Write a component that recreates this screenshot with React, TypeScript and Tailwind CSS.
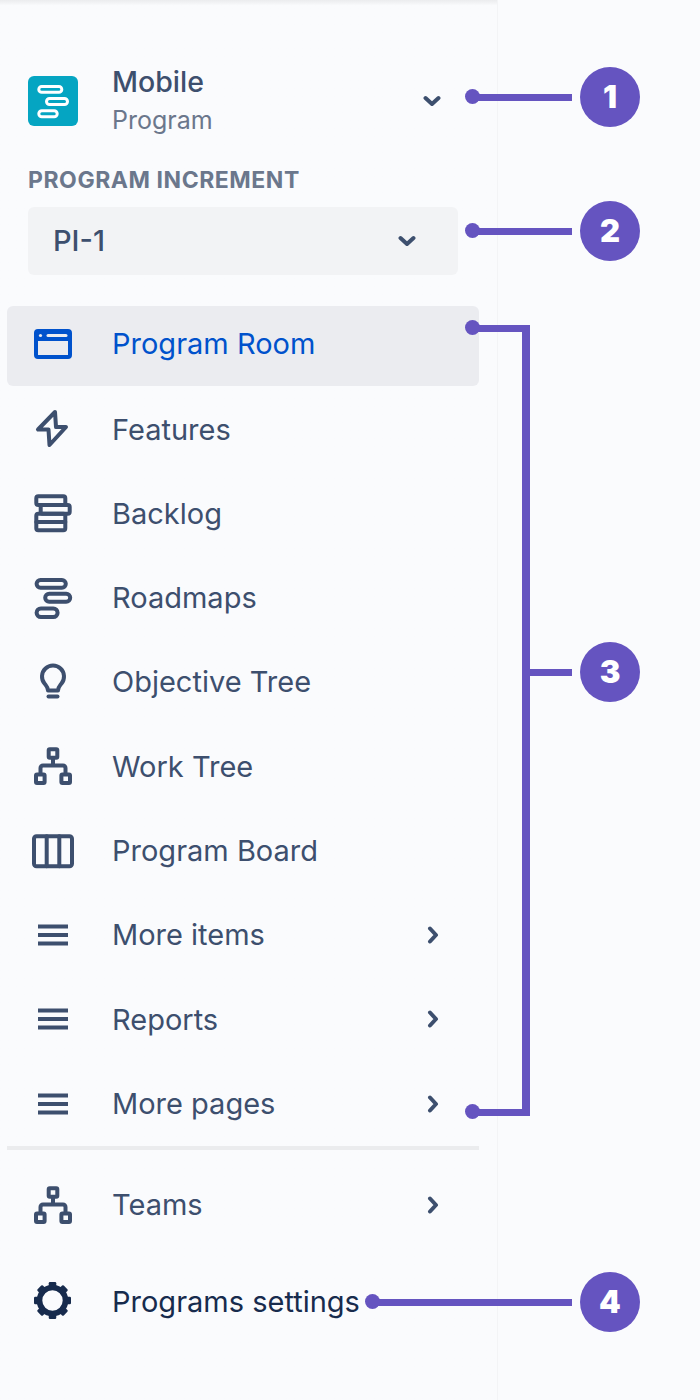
const Icon = ({ children, color = "#3d4f6e" }: { children: React.ReactNode; color?: string }) => (
  <svg width="40" height="40" viewBox="0 0 40 40" fill="none" stroke={color} strokeWidth="4" strokeLinecap="round" strokeLinejoin="round" className="shrink-0 overflow-visible">
    {children}
  </svg>
);

const WindowIcon = () => (
  <Icon color="#0052cc">
    <rect x="3" y="7" width="34" height="26" rx="2" />
    <rect x="2" y="6" width="36" height="11" fill="#0052cc" stroke="none" />
    <circle cx="7.5" cy="11.5" r="1.6" fill="#ebecf0" stroke="none" />
    <rect x="13.5" y="10" width="21" height="3" rx="1.5" fill="#ebecf0" stroke="none" />
  </Icon>
);

const BoltIcon = () => (
  <Icon>
    <path d="M22 3 5 20.5h10.5L16.5 36 33 18H23z" />
  </Icon>
);

const BacklogIcon = () => (
  <Icon>
    <rect x="3.3" y="2.3" width="29" height="8.7" rx="2" />
    <rect x="7.7" y="11" width="29" height="8.7" rx="2" />
    <rect x="3.3" y="19.7" width="29" height="16.6" rx="2" />
    <path d="M3.3 28h29" />
  </Icon>
);

const RoadmapIcon = () => (
  <Icon>
    <rect x="3.6" y="1.9" width="29.2" height="7.8" rx="3.9" />
    <rect x="12.2" y="15.8" width="25" height="8" rx="4" />
    <rect x="3.6" y="30.4" width="21" height="8.6" rx="4.3" />
  </Icon>
);

const BulbIcon = () => (
  <Icon>
    <path d="M15 28.5h10c0-3.5 1.5-4.5 3.5-7a11 11 0 1 0-17 0c2 2.5 3.5 3.5 3.5 7z" />
    <path d="M15.5 34.5h9" />
  </Icon>
);

const TreeIcon = () => (
  <Icon>
    <rect x="15.7" y="3.2" width="8.6" height="8.6" rx="1" />
    <rect x="3" y="28.4" width="8.6" height="8.6" rx="1" />
    <rect x="28.4" y="28.4" width="8.6" height="8.6" rx="1" />
    <path d="M20 12v7.5M7.5 28v-6a2.5 2.5 0 0 1 2.5-2.5h20a2.5 2.5 0 0 1 2.5 2.5v6" />
  </Icon>
);

const BoardIcon = () => (
  <Icon>
    <rect x="1" y="5.2" width="38" height="30" rx="2.5" />
    <path d="M13.7 5.2v30M26.3 5.2v30" />
  </Icon>
);

const MenuIcon = () => (
  <Icon>
    <g strokeLinecap="butt">
      <path d="M5 11.5h30M5 20h30M5 28.5h30" />
    </g>
  </Icon>
);

const GearIcon = () => (
  <Icon color="#172b4d">
    <circle cx="19.5" cy="18.5" r="13" strokeWidth="5.6" />
    {[0, 45, 90, 135, 180, 225, 270, 315].map((a) => (
      <rect key={a} x="15.75" y="0" width="7.5" height="6" rx="1.2" fill="#172b4d" stroke="none" transform={`rotate(${a} 19.5 18.5)`} />
    ))}
  </Icon>
);

const ChevronDown = () => (
  <svg width="18" height="12" viewBox="0 0 18 12" fill="none" stroke="#3d4f6e" strokeWidth="4" strokeLinecap="round" strokeLinejoin="round">
    <path d="M2.5 3 9 9l6.5-6" />
  </svg>
);

const ChevronRight = () => (
  <svg width="12" height="18" viewBox="0 0 12 18" fill="none" stroke="#3d4f6e" strokeWidth="4" strokeLinecap="round" strokeLinejoin="round">
    <path d="M3 2.5 9 9l-6 6.5" />
  </svg>
);

const items = [
  { label: "Features", icon: <BoltIcon /> },
  { label: "Backlog", icon: <BacklogIcon /> },
  { label: "Roadmaps", icon: <RoadmapIcon /> },
  { label: "Objective Tree", icon: <BulbIcon /> },
  { label: "Work Tree", icon: <TreeIcon /> },
  { label: "Program Board", icon: <BoardIcon /> },
  { label: "More items", icon: <MenuIcon />, more: true },
  { label: "Reports", icon: <MenuIcon />, more: true },
  { label: "More pages", icon: <MenuIcon />, more: true },
];

function NavRow({ label, icon, more }: { label: string; icon: React.ReactNode; more?: boolean }) {
  return (
    <div className="flex h-20 items-center pb-[2px] pl-[26px] pr-[40px] text-[#3d4f6e]">
      {icon}
      <span className="ml-[39px] flex-1">{label}</span>
      {more && <ChevronRight />}
    </div>
  );
}

// numbered callouts sit on top of the sidebar
const Callout = ({ n, className }: { n: number; className: string }) => (
  <div className={`absolute flex h-[60px] w-[60px] items-center justify-center rounded-full bg-[#6554c0] text-[31px] font-black text-white ${className}`}>
    {n}
  </div>
);

const Dot = ({ className }: { className: string }) => (
  <div className={`absolute h-[15px] w-[15px] rounded-full bg-[#6554c0] ${className}`} />
);

const Line = ({ className }: { className: string }) => <div className={`absolute bg-[#6554c0] ${className}`} />;

export default function App() {
  return (
    <div className="relative h-[1400px] w-[700px] overflow-hidden bg-[#fafbfd] font-['Inter',sans-serif] text-[29px] font-normal">
      <aside className="h-full w-[498px] border-r border-r-[#f3f4f6] bg-gradient-to-b from-[#ebecee] from-0% to-[#fafbfd] to-[0.4%] pt-[62px]">
        <div className="flex h-[78px] items-center pl-[28px] pr-[56px]">
          <svg width="50" height="50" viewBox="0 0 50 50" fill="none" stroke="#fff" strokeWidth="3" className="shrink-0">
            <rect width="50" height="50" rx="6" fill="#05a5c2" stroke="none" />
            <rect x="10.8" y="10.5" width="23" height="5.8" rx="2.9" />
            <rect x="18.5" y="22.5" width="21" height="6" rx="3" />
            <rect x="10.8" y="34.8" width="18.4" height="6" rx="3" />
          </svg>
          <div className="ml-[34px] flex-1">
            <div className="text-[28.5px] leading-[38px] font-medium text-[#3d4f6e]">Mobile</div>
            <div className="text-[25px] leading-[38px] text-[#6b778c]">Program</div>
          </div>
          <ChevronDown />
        </div>
        <div className="mt-[25px] pl-[28px] text-[23px] leading-[30px] font-bold tracking-[0.55px] text-[#6b778c]">PROGRAM INCREMENT</div>
        <div className="mt-[12px] ml-[28px] flex h-[68px] w-[430px] items-center justify-between rounded-[6px] bg-[#f2f3f5] pr-[42px] pl-[25px]">
          <span className="font-medium text-[#3d4f6e]">PI-1</span>
          <ChevronDown />
        </div>
        <nav className="mt-[31px] ml-[7px] w-[472px]">
          <div className="flex flex-col gap-[4.3px]">
            <div className="flex h-20 items-center rounded-[6px] bg-[#ebecf0] pb-[4px] pl-[26px] text-[#0052cc]">
              <WindowIcon />
              <span className="ml-[39px]">Program Room</span>
            </div>
            {items.map((it) => (
              <NavRow key={it.label} {...it} />
            ))}
          </div>
          <div className="mt-[1px] h-1 bg-[#ebecee]" />
          <div className="mt-[16px]">
            <NavRow label="Teams" icon={<TreeIcon />} more />
          </div>
          <div className="mt-[16px] flex h-20 items-center pl-[26px] text-[#172b4d]">
            <GearIcon />
            <span className="ml-[39px]">Programs settings</span>
          </div>
        </nav>
      </aside>

      <Dot className="left-[465px] top-[89px]" />
      <Line className="left-[472px] top-[94px] h-[7px] w-[100px]" />
      <Callout n={1} className="left-[580px] top-[67px]" />

      <Dot className="left-[465px] top-[223px]" />
      <Line className="left-[472px] top-[228px] h-[7px] w-[100px]" />
      <Callout n={2} className="left-[580px] top-[201px]" />

      <Dot className="left-[465px] top-[320px]" />
      <Dot className="left-[465px] top-[1104px]" />
      <Line className="left-[472px] top-[325px] h-[7px] w-[58px]" />
      <Line className="left-[522px] top-[325px] h-[791px] w-[8px]" />
      <Line className="left-[472px] top-[1109px] h-[7px] w-[58px]" />
      <Line className="left-[530px] top-[669px] h-[7px] w-[42px]" />
      <Callout n={3} className="left-[580px] top-[642px]" />

      <Dot className="left-[365px] top-[1294px]" />
      <Line className="left-[372px] top-[1299px] h-[7px] w-[200px]" />
      <Callout n={4} className="left-[580px] top-[1272px]" />
    </div>
  );
}
